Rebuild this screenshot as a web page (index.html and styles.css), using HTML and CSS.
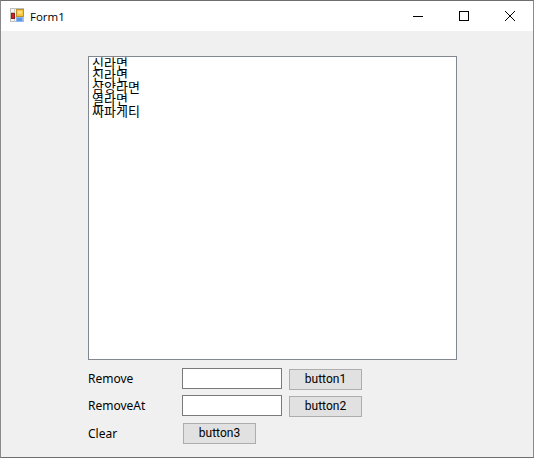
FILE: index.html
```html
<!DOCTYPE html>
<html lang="ko">
<head>
    <meta charset="UTF-8">
    <meta name="viewport" content="width=device-width, initial-scale=1.0">
    <title>Form1</title>
    <link rel="stylesheet" href="styles.css">
</head>
<body>
    <div class="window">
        <div class="titlebar">
            <svg class="app-icon" width="16" height="16" viewBox="0 0 16 16">
                <rect x="0.5" y="0.5" width="13" height="13" fill="#f6f6f6" stroke="#bdbdbd"/>
                <path d="M0 4.5h5M4.5 0v14M4 9.5h10" stroke="#c8c8c8" fill="none"/>
                <rect x="6.5" y="1.5" width="7" height="7" fill="#f5c63c" stroke="#c2922a"/>
                <rect x="8" y="3" width="4" height="3" fill="#fbdc7c"/>
                <rect x="1.5" y="5.5" width="3" height="5" fill="#c8261e" stroke="#8c1f1a"/>
                <rect x="6.5" y="9.5" width="6" height="4" fill="#5e97e6" stroke="#8fb6ec"/>
            </svg>
            <span class="title">Form1</span>
            <div class="controls">
                <svg class="control" width="46" height="30" viewBox="0 0 46 30"><path d="M18 15.5h10" stroke="#000" fill="none"/></svg>
                <svg class="control" width="46" height="30" viewBox="0 0 46 30"><rect x="18.5" y="10.5" width="9" height="9" stroke="#000" fill="none"/></svg>
                <svg class="control" width="46" height="30" viewBox="0 0 46 30"><path d="M18 10l10 10M28 10l-10 10" stroke="#000" fill="none"/></svg>
            </div>
        </div>
        <div class="client">
            <ul class="listbox">
                <li>신라면</li>
                <li>진라면</li>
                <li>삼양라면</li>
                <li>열라면</li>
                <li>짜파게티</li>
            </ul>
            <div class="row row-remove">
                <label>Remove</label>
                <input type="text">
                <button>button1</button>
            </div>
            <div class="row row-removeat">
                <label>RemoveAt</label>
                <input type="text">
                <button>button2</button>
            </div>
            <div class="row row-clear">
                <label>Clear</label>
                <button>button3</button>
            </div>
        </div>
    </div>
</body>
</html>
```

FILE: styles.css
```css
html, body {
    margin: 0;
    padding: 0;
}
body {
    width: 534px;
    height: 458px;
    overflow: hidden;
    font-family: "Noto Sans", "Noto Sans CJK KR", sans-serif;
    font-size: 12px;
    color: #000;
}
.window {
    box-sizing: border-box;
    width: 534px;
    height: 458px;
    border: 1px solid #6e6e6e;
    border-left-color: #8a8a8a;
    border-right-color: #8a8a8a;
    background-color: #f0f0f0;
    display: flex;
    flex-direction: column;
}
.titlebar {
    height: 30px;
    background-color: #fff;
    display: flex;
    align-items: center;
    padding-left: 9px;
}
.app-icon {
    margin-right: 4px;
}
.title {
    font-family: "Open Sans", sans-serif;
    font-size: 11.5px;
}
.controls {
    margin-left: auto;
    display: flex;
}
.control {
    display: block;
}
.client {
    padding: 25px 0 0 87px;
    flex: 1;
}
.listbox {
    box-sizing: border-box;
    width: 369px;
    height: 304px;
    margin: 0;
    padding: 0 0 0 3px;
    list-style: none;
    background-color: #fff;
    border: 1px solid #828790;
    font-family: "Noto Sans CJK KR", sans-serif;
    font-size: 13px;
    line-height: 12px;
}
.row {
    display: flex;
    align-items: flex-start;
    height: 27px;
}
.row-remove {
    margin-top: 8px;
}
.row label {
    width: 94px;
    line-height: 21px;
}
.row input {
    box-sizing: border-box;
    width: 100px;
    height: 21px;
    margin: 0 7px 0 0;
    padding: 1px 2px;
    border: 1px solid #7a7a7a;
    background-color: #fff;
}
.row button {
    box-sizing: border-box;
    width: 73px;
    height: 21px;
    margin: 1px 0 0 0;
    padding: 0 0 2px 0;
    border: 1px solid #adadad;
    background-color: #e1e1e1;
    font-family: "Roboto", sans-serif;
    font-size: 12px;
    color: #000;
}
.row-clear label {
    width: 95px;
    line-height: 23px;
}
```
